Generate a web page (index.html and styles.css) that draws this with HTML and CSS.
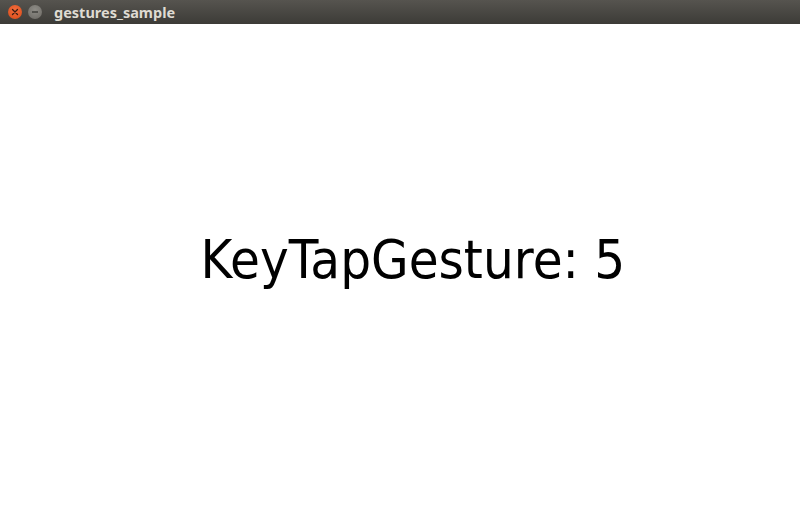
FILE: index.html
```html
<!DOCTYPE html>
<html>
<head>
<meta charset="utf-8">
<link rel="stylesheet" href="styles.css">
</head>
<body>
<div class="window">
  <div class="titlebar">
    <span class="btn close"><svg width="8" height="8" viewBox="0 0 8 8"><path d="M1.5 1.5L6.5 6.5M6.5 1.5L1.5 6.5" stroke="#3a1d12" stroke-width="1.3" stroke-linecap="round"/></svg></span>
    <span class="btn min"><svg width="8" height="8" viewBox="0 0 8 8"><path d="M1 4H7" stroke="#3c3b37" stroke-width="1.4"/></svg></span>
    <span class="title">gestures_sample</span>
  </div>
  <div class="content">
    <div class="label">KeyTapGesture: 5</div>
  </div>
</div>
</body>
</html>
```
FILE: styles.css
```css
html, body { margin: 0; padding: 0; }
body { width: 800px; height: 524px; overflow: hidden; background: #fff; }
.window { display: flex; flex-direction: column; height: 524px; }
.titlebar {
  height: 24px;
  flex: none;
  background: linear-gradient(#56544f, #3c3b37);
  display: flex;
  align-items: center;
  padding-left: 8px;
  box-sizing: border-box;
}
.btn {
  width: 14px; height: 14px; border-radius: 50%;
  display: flex; align-items: center; justify-content: center;
  margin-right: 6px;
}
.close { background: radial-gradient(circle at 50% 35%, #f26d3d, #d94a17); }
.min { background: radial-gradient(circle at 50% 35%, #8f8d87, #6a6863); }
.title {
  margin-left: 6px;
  font-family: "Noto Sans", "DejaVu Sans", sans-serif;
  font-weight: bold;
  font-size: 14.5px;
  color: #dfdbd2;
}
.content {
  flex: 1;
  display: flex;
  align-items: center;
  justify-content: center;
  padding-left: 26px;
}
.label {
  font-family: "DejaVu Sans", sans-serif;
  font-size: 54px;
  color: #000;
  margin-top: -30px;
  transform: scaleX(0.9);
  white-space: nowrap;
}
```
